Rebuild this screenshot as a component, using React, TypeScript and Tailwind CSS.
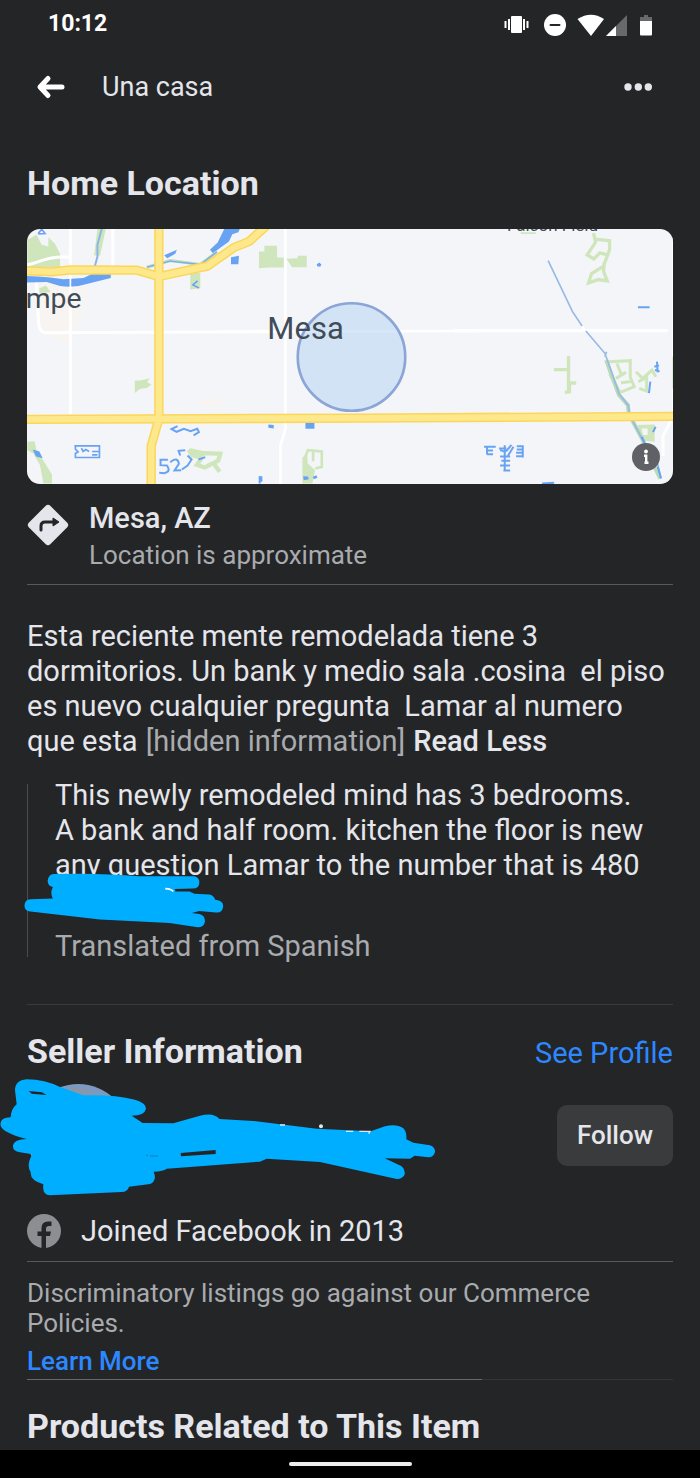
import type { ReactNode } from "react";

function StatusBar() {
  return (
    <div className="flex h-12 items-center justify-between px-12">
      <span className="text-[23px] font-bold leading-9 text-white">10:12</span>
      <svg viewBox="0 0 150 24" className="h-6 w-[150px]" fill="#fff" aria-label="Status icons">
        <rect x="9" y="4" width="11" height="17" rx="1" />
        <path d="M6 7h2v11H6zM21 7h2v11h-2zM2.500 9h2v7h-2zM24.500 9h2v7h-2z" />
        <circle cx="53" cy="13" r="11" />
        <path d="M48.500 13h9" stroke="#242527" strokeWidth="2" strokeLinecap="round" />
        <path d="M75.500 7Q89-1.500 102 7L89 24Z" />
        <path d="M104 24 125 3v21Z" fill="#68696b" />
        <path d="M104 24l10-10v10Z" />
        <path d="M138 10V5h4V3h4v2h4v5Z" fill="#68696b" />
        <path d="M138 9h12v13.500q0 1-1 1h-10q-1 0-1-1Z" />
      </svg>
    </div>
  );
}

function Header() {
  return (
    <header className="flex h-[78px] items-center px-9">
      <button type="button" aria-label="Back" className="mr-9">
        <svg
          viewBox="0 0 30 26"
          className="h-[26px] w-[30px]"
          fill="none"
          stroke="#fff"
          strokeWidth="5"
          strokeLinecap="round"
          strokeLinejoin="round"
        >
          <path d="M12 4.500 4 13l8 8.500M4.500 13H26" />
        </svg>
      </button>
      <h1 className="flex-1 text-[27px] text-[#e4e6eb]">Una casa</h1>
      <button type="button" aria-label="More options" className="mr-1 p-2">
        <svg viewBox="0 0 28 8" className="h-2 w-7" fill="#e4e6eb">
          <circle cx="4" cy="4" r="3.700" />
          <circle cx="14.300" cy="4" r="3.700" />
          <circle cx="24.300" cy="4" r="3.700" />
        </svg>
      </button>
    </header>
  );
}

function RoadMap() {
  return (
    <svg
      viewBox="0 0 1935 765"
      preserveAspectRatio="xMidYMid slice"
      className="block h-[255px] w-full bg-[#f4f5f8]"
      fill="none"
    >
      {/* west side */}
      <g transform="translate(-21 -27)">
        <path d="M50 180h150v60L150 370 60 335Z" fill="#f8f4f2" />
        <path d="M22 60 50 45l15 30 20 5V52l20 20 15 30v40H22Z" fill="#cfe6bc" />
        <path d="M232 27h25l-17 80h-18ZM58 205l20-8 14 20-34 2Z" fill="#cfe6bc" />
        <path d="M22 135C60 130 70 108 150 112M278 27v120M151 27v555M48 170l8 140q2 26 20 28L740 335" stroke="#fff" strokeWidth="9" />
        <path d="M245 27 232 75v35l-8 30" stroke="#8ab5e8" strokeWidth="6" />
        <path d="M54 42 65 28l10 13-20 1" stroke="#6ea5f2" strokeWidth="5" />
        <path d="M20 168Q90 170 130 178L190 174 225 158 272 162v12L200 192Q160 205 120 198L80 186 20 188Z" fill="#68a3f3" />
        <path d="M151 165v40" stroke="#fff" strokeWidth="5" />
        <path d="M612 27h47l-5 10-18 6-10 22-28 20-20 15-9-10 23-22 10-20Z" fill="#68a3f3" />
        <path d="M380 142 450 122l90 12 50-38" stroke="#bcdcbb" strokeWidth="9" />
        <path d="M380 142 450 124l90 10 50-38" stroke="#7baee8" strokeWidth="4" />
        <path d="m432 106 38-16-5 12-24 13ZM632 112l24-4-2 25h-22Z" fill="#68a3f3" />
        <path d="m510 155 30 5v45l-30 4Z" fill="#cfe6bc" />
        <path d="m532 183-14 12 18 9" stroke="#68a3f3" strokeWidth="5" />
        <path d="m344 482 20-1 24-6-7 12 13 6-14 11-20 2-16 13Z" fill="#cfe6bc" />
        <path d="m22 665 22-2 5 25 25 40 22 35v27H70L60 735 40 700 22 690Z" fill="#cfe6bc" />
        <path d="m38 688 20 6 10 20-20-5Z" fill="#68a3f3" />
        <path d="M163 677h75v35h-72v-12l8-5-8-8v-10M184 684l5 10 8-6 10 6M236 694h-20M232 704h-16" stroke="#68a3f3" strokeWidth="5" />
        <path d="m472 618-18 9 15 8 22-9 20 7 20-7 5 10-16 10M443 719h-22v16l19 1q14 18-8 23l-15-1M450 726q22-18 26 5l-13 20 20-1M495 690l-20 2 5 14M502 706l12 12-12 18-17 12" stroke="#68a3f3" strokeWidth="6" />
        <path d="m505 690 25 12 25-3 45 2-6 20-14 8 18 26M545 712l-15 22 24 8 22-12" stroke="#cfe6bc" strokeWidth="13" />
        <path d="m500 692 13-8 50 12-25 22-28-8Z" fill="#cfe6bc" />
        <path d="m535 718 20-7M718 768v22" stroke="#68a3f3" strokeWidth="6" />
        <path d="M530 545q45-25 75 0l-5 15h-50Z" fill="#f8f4f2" />
      </g>

      {/* centre */}
      <g transform="translate(639 -27)">
        <path d="M135 27v600l-15 50v115M-60 335l780-2" stroke="#fff" strokeWidth="8" />
        <path d="M56 95h16V78h38v35h20v30H86l-30 2ZM138 117l34-2v-7h27v34h-44ZM186 712l14-12 2 30 22 20-8 40h-30Z" fill="#cfe6bc" />
        <path d="m192 718 10-28 42 4v46l-20 5M218 695v28" stroke="#cfe6bc" strokeWidth="8" />
        <path d="m229 133 8-5 6 7-4 6-9-2ZM84 613l16 2v10l-16-2ZM195 606h27v20h-27ZM56 768h10v17H56ZM188 768l15 1 2 8-15 3ZM217 770l11-5 3 8-11 4Z" fill="#68a3f3" />
      </g>

      {/* east side */}
      <g transform="translate(1299 -27)">
        <path d="M-20 332h640M638 27v560l-32 60v60" stroke="#fff" strokeWidth="9" />
        <path d="M180 40h45" stroke="#cfe6bc" strokeWidth="5" />
        <path d="m398 40 6 27-25 38 20 12 18-18 20 5M403 58l43 5v26l-18 50-36 22-9 28 30-10 26 4-11-28 2-28" stroke="#cfe6bc" strokeWidth="10" />
        <path d="M323 408v110M279 449h45M312 517l14-2v-26h20" stroke="#cfe6bc" strokeWidth="10" />
        <path d="m443 425 65-3v50l12 28-42 17-32-55M468 430l14 36M465 475l30-18M480 488l35-4M525 455l20 20 28-25 12 20M532 485l25-12v40l-22-8" stroke="#cfe6bc" strokeWidth="9" />
        <path d="m531 615 50-2v52l-30-3-18-30Z" fill="#cfe6bc" />
        <path d="M542 625h18v20h-14Z" fill="#f4f5f8" />
        <path d="M436 420 450 460l24 65 27 30 2 25 40 75 25 60 30 60" stroke="#b9dbb8" strokeWidth="12" />
        <path d="M262 122 335 275 368 325 432 400 450 450 474 520 502 556 508 590 543 655 590 730 600 775M437 395l-5 15" stroke="#98b9e4" strokeWidth="5" />
        <path d="M531 262h35M588 425l2 32M580 440l14-4M582 450l14 4M568 485l-4 34M584 620l-8 16M70 680h35M79 680v23M79 691h18M79 702h18M115 685h22M118 690l17 6M152 674l-16 20M158 680l-18 30M132 675v78M118 709h30M122 722h26M118 736h30M128 751h20M168 678h18v34M168 688h18M166 698h18M166 708h20M244 790l36-2M542 650l9 18M590 740l10 34" stroke="#68a3f3" strokeWidth="6" />
        <path d="m364 318 10 16" stroke="#fff" strokeWidth="8" />
        <path d="M637 410v95" stroke="#cfe6bc" strokeWidth="6" />
      </g>

      {/* highways: casing first, then fill */}
      <g strokeLinejoin="round">
        <path d="M0 126 75 129 130 123 330 124 395 143 540 112 620 56 665 38 718 -10M395 -10V570L372 650V775M0 571 1000 567 1935 562" stroke="#fbd65b" strokeWidth="28" />
        <path d="M0 126 75 129 130 123 330 124 395 143 540 112 620 56 665 38 718 -10M395 -10V570L372 650V775M0 571 1000 567 1935 562" stroke="#fde98c" strokeWidth="19" />
      </g>

      <circle cx="972" cy="384" r="161" fill="#bfd8f5" fillOpacity=".62" stroke="#8ba5d6" strokeWidth="8" />
      <g fill="#414c57" className="font-[Roboto,sans-serif]">
        <text x="-4" y="237" fontSize="85">mpe</text>
        <text x="720" y="330" fontSize="93">Mesa</text>
        <text x="1438" y="8" fontSize="51">Falcon Field</text>
      </g>
    </svg>
  );
}

function LocationCard() {
  return (
    <section>
      <h2 className="text-[34px] font-bold leading-10">Home Location</h2>
      <div className="relative mt-[26px] overflow-hidden rounded-[13px]">
        <RoadMap />
        <button
          type="button"
          aria-label="Map information"
          className="absolute bottom-[13px] right-[13px]"
        >
          <svg viewBox="0 0 28 28" className="h-7 w-7">
            <circle cx="14" cy="14" r="14" fill="#606166" />
            <circle cx="14" cy="8.500" r="1.900" fill="#fff" />
            <path d="M12 12.700h2.200V19M12.500 19.700h4" stroke="#fff" strokeWidth="2.400" fill="none" />
          </svg>
        </button>
      </div>
      <div className="flex border-b border-[#58595b] pb-2.5 pt-4">
        <svg viewBox="0 0 42 42" className="mr-5 mt-1 h-[42px] w-[42px]">
          <path
            d="M18.500 2 2 18.500q-2.500 2.500 0 5L18.500 40q2.500 2.500 5 0L40 23.500q2.500-2.500 0-5L23.500 2q-2.500-2.500-5 0Z"
            fill="#e4e6eb"
          />
          <path d="M14 26v-4q0-4 4-4h9" stroke="#242527" strokeWidth="3" strokeLinecap="round" fill="none" />
          <path d="m26 14 6 4-6 4Z" fill="#242527" stroke="#242527" strokeLinejoin="round" />
        </svg>
        <div>
          <p className="text-[29px] font-medium leading-9">Mesa, AZ</p>
          <p className="text-[26px] leading-[38px] text-[#a9abaf]">Location is approximate</p>
        </div>
      </div>
    </section>
  );
}

function TextScribble() {
  return (
    <svg viewBox="72 310 604 166" className="absolute -left-1 top-[89px] h-[55px] w-[201px]" fill="#00aeff">
      <path d="M160 313Q300 309 420 320L585 320Q600 324 600 338 600 357 580 357L525 358 528 366 570 366 585 373 630 375Q643 377 648 391 672 393 672 410 670 431 650 429L600 425 577 431 600 434Q617 438 617 455 615 474 595 474L510 461 300 450 90 426Q72 424 72 407 74 389 92 389L158 387Q148 370 158 352 142 350 142 333 145 314 160 313Z" />
      <path d="M497 357q19 1 24 9" stroke="#fff" strokeWidth="5" fill="none" />
    </svg>
  );
}

function Description() {
  return (
    <section className="border-b border-[#3a3b3d] pb-[47px] pt-[34px] text-[29px] leading-[35px]">
      <p className="whitespace-pre-wrap">
        {"Esta reciente mente remodelada tiene 3\ndormitorios. Un bank y medio sala .cosina  el piso\nes nuevo cualquier pregunta  Lamar al numero"}
      </p>
      <p className="flex flex-wrap gap-x-2">
        <span>que esta</span>
        <span className="text-[#a9abaf]">[hidden information]</span>
        <button type="button" className="font-medium">
          Read Less
        </button>
      </p>
      <blockquote className="relative mt-[25px] flex h-[173px] flex-col border-l border-[#4a4b4d] pl-[27px]">
        <p className="-mt-1.5 whitespace-pre-line">
          {"This newly remodeled mind has 3 bedrooms.\nA bank and half room. kitchen the floor is new\nany question Lamar to the number that is 480"}
        </p>
        <TextScribble />
        <p className="mt-[46px] text-[#a9abaf]">Translated from Spanish</p>
      </blockquote>
    </section>
  );
}

function SellerScribble() {
  return (
    <svg viewBox="0 170 1308 360" className="absolute -left-[27px] -top-7 h-[120px] w-[436px]">
      <circle cx="235" cy="345" r="154" fill="#7c9ac0" />
      <path d="M200 208q45-16 85 17Z" fill="#8b96a6" />
      <path
        d="M80 177Q135 178 180 200L250 225Q340 222 405 238 438 248 438 265 434 286 395 286L428 308 520 309 600 286Q642 275 658 296L760 302 950 325 1112 333 1155 318Q1190 310 1210 324 1221 335 1219 357L1240 367 1290 375Q1306 381 1305 395 1301 411 1285 411L1244 406 1230 415 1154 414 1205 438Q1218 450 1213 465 1205 477 1190 476L960 425 800 415 780 424 500 445Q490 453 461 454 472 482 450 491L387 499Q383 514 365 515L150 525Q126 524 130 492 90 481 92 456 78 434 97 402L60 396Q37 393 39 375 42 357 80 356 8 337 2 316-3 292 32 291 33 266 50 252L45 210Q45 180 80 177Z"
        fill="#00aeff"
      />
      <path d="m86 212 40 4 14 8-45-4ZM542 398l105-9v12l-104 7Z" fill="#242527" />
      <path d="M439 405h5M450 407h24" stroke="#187bad" strokeWidth="3" />
      <circle cx="963" cy="318" r="6" fill="#e4e6eb" />
      <path d="M1078 333h32l-4 7M1038 333h22M840 314h15" stroke="#e4e6eb" strokeWidth="4" fill="none" />
    </svg>
  );
}

function Seller() {
  return (
    <section className="border-b border-[#58595b] pb-3 pt-[26px]">
      <div className="flex items-end justify-between">
        <h2 className="text-[34px] font-bold leading-10">Seller Information</h2>
        <a href="#profile" className="text-[29px] leading-9 text-[#2d88ff]">
          See Profile
        </a>
      </div>
      <div className="relative mt-[34px] flex justify-end">
        <SellerScribble />
        <button
          type="button"
          className="h-[61px] rounded-[10px] bg-[#3a3b3c] px-5 text-[26px] font-medium text-[#e4e6eb]"
        >
          Follow
        </button>
      </div>
      <div className="mt-[47px] flex items-center gap-5">
        <svg viewBox="0 0 34 34" className="h-[34px] w-[34px]">
          <circle cx="17" cy="17" r="17" fill="#8c8e92" />
          <path
            d="M14.500 34V22h-4v-4.500h4V14q0-6.500 6.500-6.500h3.500V12H22q-3 0-3 2.500v3h5l-1 4.500h-4v12Z"
            fill="#242527"
          />
        </svg>
        <p className="text-[29px] leading-9">Joined Facebook in 2013</p>
      </div>
    </section>
  );
}

function Screen({ children }: { children: ReactNode }) {
  return (
    <div className="min-h-screen bg-[#242527] font-[Roboto,sans-serif] text-[#e4e6eb]">{children}</div>
  );
}

export default function App() {
  return (
    <Screen>
      <StatusBar />
      <Header />
      <main className="px-[27px] pb-1 pt-[37px]">
        <LocationCard />
        <Description />
        <Seller />
        <section className="pt-4 text-[26px] leading-[30px]">
          <p className="text-[#a9abaf]">Discriminatory listings go against our Commerce Policies.</p>
          <a href="#policies" className="mt-2 block font-medium text-[#2d88ff]">
            Learn More
          </a>
        </section>
        <div className="mt-[3px] flex h-px">
          <div className="w-[455px] bg-[#68696b]" />
          <div className="flex-1 bg-[#343537]" />
        </div>
        <h2 className="mt-[26px] text-[34px] font-bold leading-10">Products Related to This Item</h2>
      </main>
      <footer className="flex h-7 items-center justify-center bg-black">
        <div className="h-1 w-[123px] rounded-full bg-[#eeeeee]" />
      </footer>
    </Screen>
  );
}
